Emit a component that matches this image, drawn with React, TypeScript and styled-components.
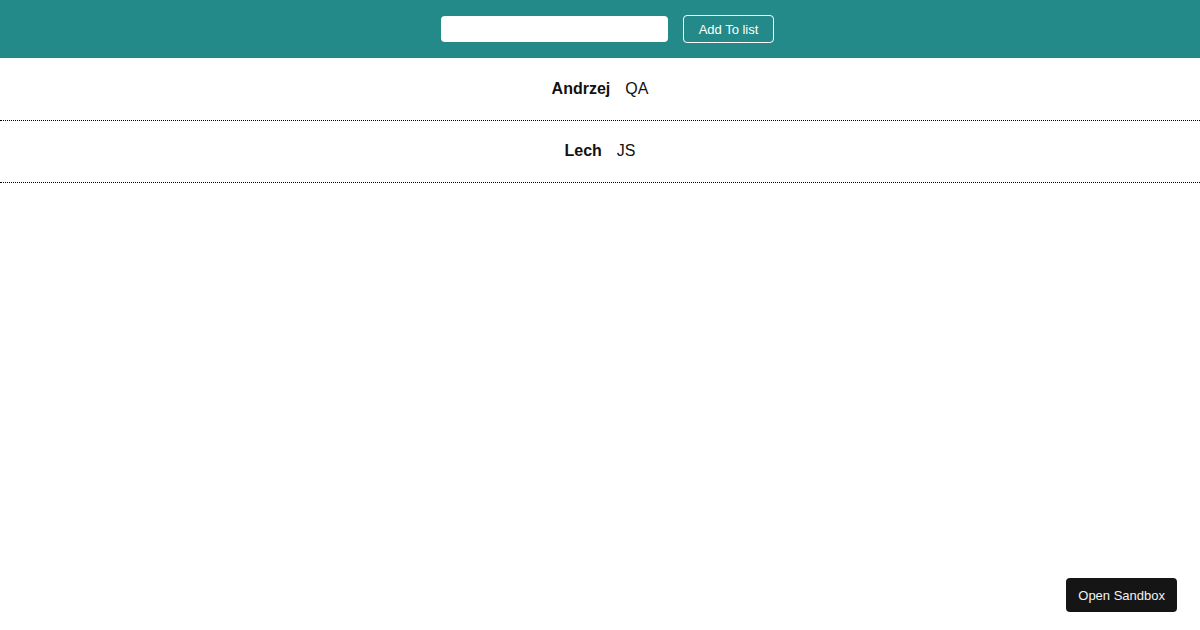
import styled, { createGlobalStyle } from "styled-components";
import { useState } from "react";

const GlobalStyle = createGlobalStyle`
  body {
    margin: 0;
    font-family: "Liberation Sans", Arial, sans-serif;
    background: #fff;
  }
`;

const Header = styled.header`
  height: 58px;
  background-color: #238a89;
  display: flex;
  align-items: center;
  justify-content: center;
  gap: 15px;
  padding-left: 15px;
`;

const Input = styled.input`
  width: 227px;
  height: 26px;
  box-sizing: border-box;
  border: none;
  border-radius: 4px;
  padding: 0 8px;
  outline: none;
`;

const AddButton = styled.button`
  height: 28px;
  padding: 0 15px;
  background: transparent;
  border: 1px solid #fff;
  border-radius: 4px;
  color: #fff;
  font-family: "Liberation Sans", Arial, sans-serif;
  font-size: 13px;
  cursor: pointer;
`;

const List = styled.ul`
  list-style: none;
  margin: 0;
  padding: 0;
`;

const Row = styled.li`
  height: 62.5px;
  box-sizing: border-box;
  border-bottom: 1px dotted #000;
  display: flex;
  align-items: center;
  justify-content: center;
  gap: 15px;
  font-size: 16px;
  color: #111;
`;

const Name = styled.strong`
  font-weight: bold;
`;

const SandboxButton = styled.button`
  position: fixed;
  right: 23px;
  bottom: 18px;
  height: 34px;
  padding: 0 12px;
  background: #151515;
  color: #f2f2f2;
  border: none;
  border-radius: 4px;
  font-family: "Liberation Sans", Arial, sans-serif;
  font-size: 13px;
`;

interface Person {
  name: string;
  role: string;
}

export default function App() {
  const [value, setValue] = useState("");
  const [people, setPeople] = useState<Person[]>([
    { name: "Andrzej", role: "QA" },
    { name: "Lech", role: "JS" },
  ]);

  const add = () => {
    if (!value.trim()) return;
    setPeople([...people, { name: value, role: "" }]);
    setValue("");
  };

  return (
    <>
      <GlobalStyle />
      <Header>
        <Input value={value} onChange={(e) => setValue(e.target.value)} />
        <AddButton onClick={add}>Add To list</AddButton>
      </Header>
      <List>
        {people.map((p, i) => (
          <Row key={i}>
            <Name>{p.name}</Name>
            <span>{p.role}</span>
          </Row>
        ))}
      </List>
      <SandboxButton>Open Sandbox</SandboxButton>
    </>
  );
}
